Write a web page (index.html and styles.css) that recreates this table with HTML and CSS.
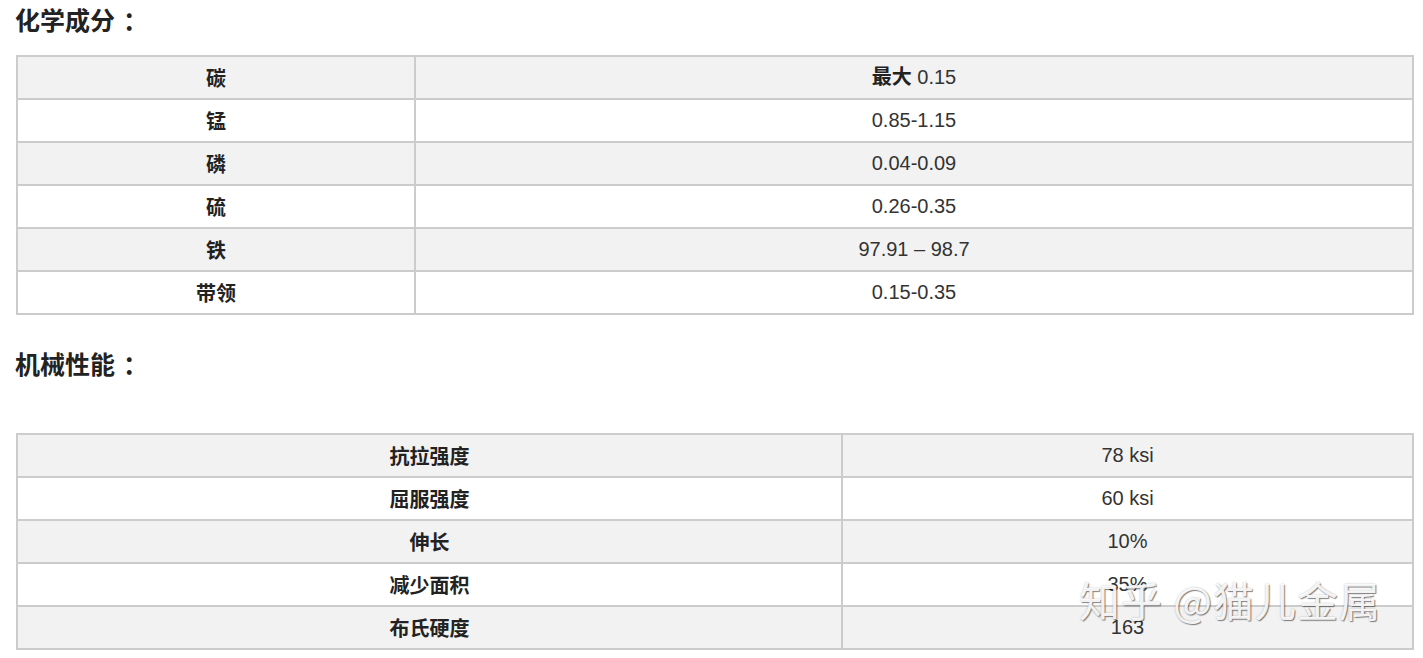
FILE: index.html
```html
<!DOCTYPE html>
<html lang="zh-CN">
<head>
<meta charset="utf-8">
<title>化学成分</title>
<link rel="stylesheet" href="styles.css">
</head>
<body>
<div class="page">
  <h2 class="heading">化学成分<span class="colon">：</span></h2>
  <table class="spec spec-chem">
    <colgroup><col class="c1"><col></colgroup>
    <tbody>
      <tr><td class="k">碳</td><td class="v"><b>最大</b> 0.15</td></tr>
      <tr><td class="k">锰</td><td class="v">0.85-1.15</td></tr>
      <tr><td class="k">磷</td><td class="v">0.04-0.09</td></tr>
      <tr><td class="k">硫</td><td class="v">0.26-0.35</td></tr>
      <tr><td class="k">铁</td><td class="v">97.91 – 98.7</td></tr>
      <tr><td class="k">带领</td><td class="v">0.15-0.35</td></tr>
    </tbody>
  </table>

  <h2 class="heading heading-2">机械性能<span class="colon">：</span></h2>
  <table class="spec spec-mech">
    <colgroup><col class="c1"><col></colgroup>
    <tbody>
      <tr><td class="k">抗拉强度</td><td class="v">78 ksi</td></tr>
      <tr><td class="k">屈服强度</td><td class="v">60 ksi</td></tr>
      <tr><td class="k">伸长</td><td class="v">10%</td></tr>
      <tr><td class="k">减少面积</td><td class="v">35%</td></tr>
      <tr><td class="k">布氏硬度</td><td class="v">163</td></tr>
    </tbody>
  </table>
  <div class="watermark">知乎 @猫儿金属</div>
</div>
</body>
</html>
```

FILE: styles.css
```css
html, body {
  margin: 0;
  padding: 0;
  background: #ffffff;
}

.page {
  position: relative;
  padding: 0 8px 8px 16px;
  font-family: "Liberation Sans", "Noto Sans CJK SC", sans-serif;
  color: #333333;
}

.heading {
  margin: 0;
  margin-left: -1px;
  font-family: "Noto Sans CJK SC", "Liberation Sans", sans-serif;
  font-size: 25px;
  font-weight: 700;
  line-height: 38px;
  color: #222222;
}

.heading .colon {
  margin-left: 8px;
}

.heading-2 {
  margin-top: 29px;
}

.spec {
  border-collapse: collapse;
  table-layout: fixed;
  width: 1398px;
  margin-top: 17px;
}

.spec-mech {
  margin-top: 51px;
}

.spec-chem .c1 { width: 398px; }
.spec-mech .c1 { width: 825px; }

.spec td {
  border: 2px solid #cccccc;
  padding: 9px 4px;
  height: 23px;
  line-height: 23px;
  font-size: 20px;
  text-align: center;
  vertical-align: middle;
}

.spec tr:nth-child(odd) td {
  background: #f2f2f2;
}

.spec tr:nth-child(even) td {
  background: #ffffff;
}

.spec .k {
  font-family: "Noto Sans CJK SC", "Liberation Sans", sans-serif;
  font-weight: 700;
  color: #222222;
}

.spec .v b {
  font-family: "Noto Sans CJK SC", "Liberation Sans", sans-serif;
  font-weight: 700;
  line-height: 1;
  color: #222222;
}

.watermark {
  position: absolute;
  left: 1079px;
  top: 572px;
  font-family: "Noto Sans CJK SC", sans-serif;
  font-size: 41px;
  font-weight: 400;
  line-height: 54px;
  color: rgba(255, 255, 255, 0.92);
  text-shadow: 1px 1px 1px rgba(0, 0, 0, 0.45), 0 0 2px rgba(0, 0, 0, 0.25);
  letter-spacing: 1px;
  white-space: nowrap;
  pointer-events: none;
}
```
